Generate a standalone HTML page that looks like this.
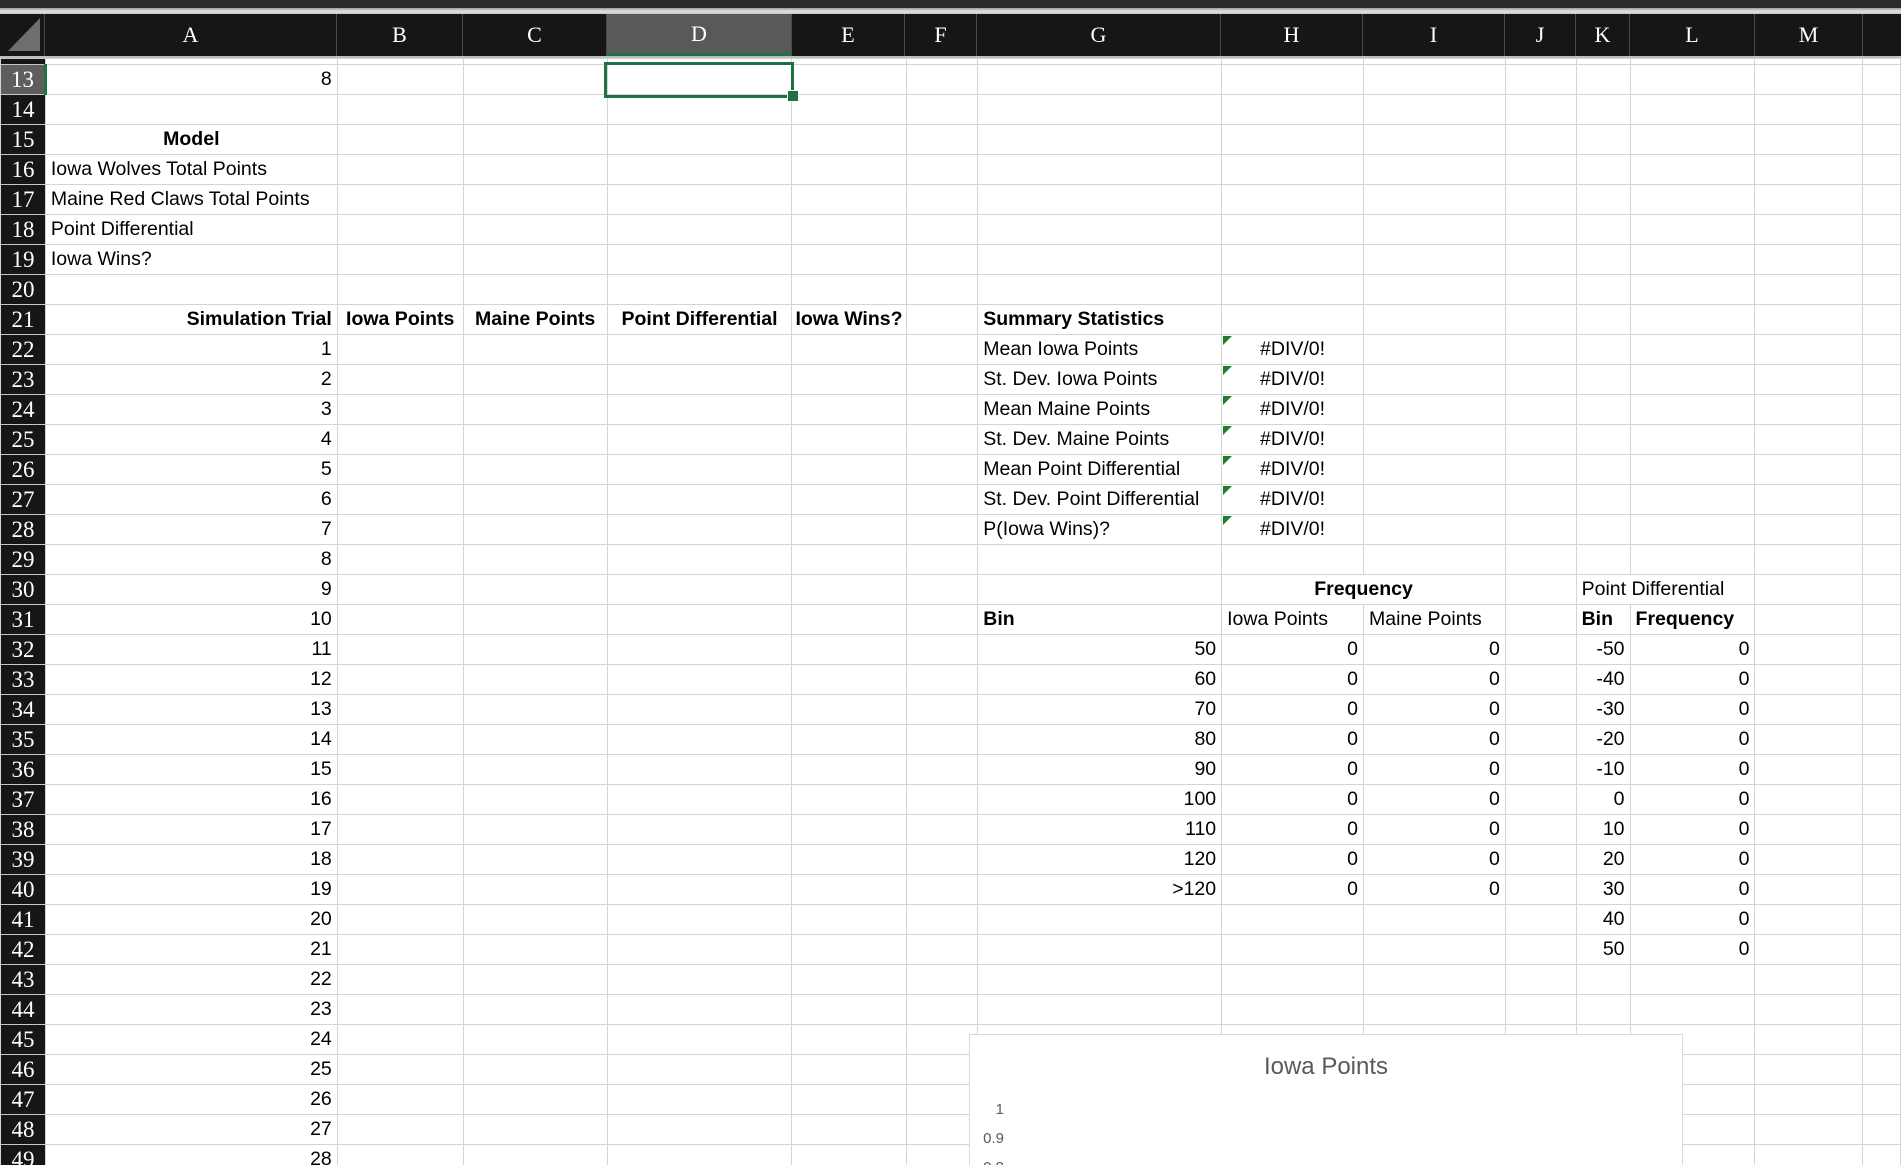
<!DOCTYPE html>
<html><head><meta charset="utf-8">
<style>
html,body{margin:0;padding:0;background:#fff;width:1901px;height:1165px;overflow:hidden;position:relative;font-family:"Liberation Sans",sans-serif;}
.top{position:absolute;left:0;top:0;width:1901px;height:8px;background:#2b2b2b;}
.band{position:absolute;left:0;top:8px;width:1901px;height:6px;background:linear-gradient(#9a9a9a,#e0e0e0,#c8c8c8);}
.hdr{position:absolute;left:0;top:14px;height:42px;width:1901px;background:#161616;}
.hdr div{position:absolute;top:0;height:42px;border-right:1px solid #4a4a4a;color:#fff;font-family:"Liberation Serif",serif;font-size:22px;line-height:42px;text-align:center;box-sizing:border-box;}
.hb{position:absolute;left:0;top:56px;width:1901px;height:2px;background:#bdbdbd;}
.wrap{position:absolute;left:0;top:0;width:1901px;height:1165px;overflow:hidden;}
table{position:absolute;left:0;top:58px;border-collapse:collapse;table-layout:fixed;}
td,th{padding:0 5px;border:1px solid #d4d4d4;height:30px;box-sizing:border-box;font-size:19.5px;white-space:nowrap;overflow:visible;color:#000;}
th{background:#161616;color:#fff;font-family:"Liberation Serif",serif;font-weight:normal;font-size:23px;text-align:center;padding:0;border-color:#c8c8c8 #d4d4d4;}
tr.p td,tr.p th{height:6px;}
.r{text-align:right}.c{text-align:center}.b{font-weight:bold}
.tri{position:relative}
.tri:before{content:"";position:absolute;left:1px;top:1px;border-top:9px solid #1d7f2e;border-right:9px solid transparent;}
.sel{position:absolute;left:604px;top:62px;width:190px;height:36px;border:3px solid #1e7145;box-sizing:border-box;}
.hdl{position:absolute;left:787px;top:90px;width:10px;height:10px;background:#1e7145;border:1px solid #fff;}
.chart{position:absolute;left:969px;top:1034px;width:714px;height:131px;background:#fff;border:1px solid #d9d9d9;border-bottom:none;box-sizing:border-box;overflow:hidden;}
.chart .t{position:absolute;left:0;width:100%;top:18px;text-align:center;font-size:24px;color:#595959;}
.chart .y{position:absolute;font-size:15px;color:#595959;text-align:right;width:40px;left:-6px;}
</style></head><body>
<div class="wrap">
<div class="top"></div><div class="band"></div>
<div class="hdr">
<div style="left:0;width:45px;background:#161616"><svg width="44" height="42"><polygon points="40,4 40,37 8,37" fill="#6e6e6e"/></svg></div>
<div style="left:45px;width:292px">A</div>
<div style="left:337px;width:126px">B</div>
<div style="left:463px;width:144px">C</div>
<div style="left:607px;width:185px;background:#595959;border-bottom:3px solid #1e7145;line-height:40px">D</div>
<div style="left:792px;width:113px">E</div>
<div style="left:905px;width:72px">F</div>
<div style="left:977px;width:244px">G</div>
<div style="left:1221px;width:142px">H</div>
<div style="left:1363px;width:142px">I</div>
<div style="left:1505px;width:71px">J</div>
<div style="left:1576px;width:54px">K</div>
<div style="left:1630px;width:125px">L</div>
<div style="left:1755px;width:108px">M</div>
</div>
<div class="hb"></div>
<table>
<colgroup><col style="width:45px"><col style="width:292px"><col style="width:126px"><col style="width:144px"><col style="width:185px"><col style="width:113px"><col style="width:72px"><col style="width:244px"><col style="width:142px"><col style="width:142px"><col style="width:71px"><col style="width:54px"><col style="width:125px"><col style="width:108px"><col style="width:38px"></colgroup>
<tr class="p"><th></th><td></td><td></td><td></td><td></td><td></td><td></td><td></td><td></td><td></td><td></td><td></td><td></td><td></td><td></td></tr>
<tr><th style="background:#5e5e5e;border-right:3px solid #1e7145">13</th><td class="r">8</td><td></td><td></td><td></td><td></td><td></td><td></td><td></td><td></td><td></td><td></td><td></td><td></td><td></td></tr>
<tr><th>14</th><td></td><td></td><td></td><td></td><td></td><td></td><td></td><td></td><td></td><td></td><td></td><td></td><td></td><td></td></tr>
<tr><th>15</th><td class="c b">Model</td><td></td><td></td><td></td><td></td><td></td><td></td><td></td><td></td><td></td><td></td><td></td><td></td><td></td></tr>
<tr><th>16</th><td>Iowa Wolves Total Points</td><td></td><td></td><td></td><td></td><td></td><td></td><td></td><td></td><td></td><td></td><td></td><td></td><td></td></tr>
<tr><th>17</th><td>Maine Red Claws Total Points</td><td></td><td></td><td></td><td></td><td></td><td></td><td></td><td></td><td></td><td></td><td></td><td></td><td></td></tr>
<tr><th>18</th><td>Point Differential</td><td></td><td></td><td></td><td></td><td></td><td></td><td></td><td></td><td></td><td></td><td></td><td></td><td></td></tr>
<tr><th>19</th><td>Iowa Wins?</td><td></td><td></td><td></td><td></td><td></td><td></td><td></td><td></td><td></td><td></td><td></td><td></td><td></td></tr>
<tr><th>20</th><td></td><td></td><td></td><td></td><td></td><td></td><td></td><td></td><td></td><td></td><td></td><td></td><td></td><td></td></tr>
<tr><th>21</th><td class="r b">Simulation Trial</td><td class="c b" style="padding:0">Iowa Points</td><td class="c b" style="padding:0">Maine Points</td><td class="c b" style="padding:0">Point Differential</td><td class="b" style="padding:0 3px">Iowa Wins?</td><td></td><td class="b">Summary Statistics</td><td></td><td></td><td></td><td></td><td></td><td></td><td></td></tr>
<tr><th>22</th><td class="r">1</td><td></td><td></td><td></td><td></td><td></td><td>Mean Iowa Points</td><td class="c tri">#DIV/0!</td><td></td><td></td><td></td><td></td><td></td><td></td></tr>
<tr><th>23</th><td class="r">2</td><td></td><td></td><td></td><td></td><td></td><td>St. Dev. Iowa Points</td><td class="c tri">#DIV/0!</td><td></td><td></td><td></td><td></td><td></td><td></td></tr>
<tr><th>24</th><td class="r">3</td><td></td><td></td><td></td><td></td><td></td><td>Mean Maine Points</td><td class="c tri">#DIV/0!</td><td></td><td></td><td></td><td></td><td></td><td></td></tr>
<tr><th>25</th><td class="r">4</td><td></td><td></td><td></td><td></td><td></td><td>St. Dev. Maine Points</td><td class="c tri">#DIV/0!</td><td></td><td></td><td></td><td></td><td></td><td></td></tr>
<tr><th>26</th><td class="r">5</td><td></td><td></td><td></td><td></td><td></td><td>Mean Point Differential</td><td class="c tri">#DIV/0!</td><td></td><td></td><td></td><td></td><td></td><td></td></tr>
<tr><th>27</th><td class="r">6</td><td></td><td></td><td></td><td></td><td></td><td>St. Dev. Point Differential</td><td class="c tri">#DIV/0!</td><td></td><td></td><td></td><td></td><td></td><td></td></tr>
<tr><th>28</th><td class="r">7</td><td></td><td></td><td></td><td></td><td></td><td>P(Iowa Wins)?</td><td class="c tri">#DIV/0!</td><td></td><td></td><td></td><td></td><td></td><td></td></tr>
<tr><th>29</th><td class="r">8</td><td></td><td></td><td></td><td></td><td></td><td></td><td></td><td></td><td></td><td></td><td></td><td></td><td></td></tr>
<tr><th>30</th><td class="r">9</td><td></td><td></td><td></td><td></td><td></td><td></td><td colspan="2" class="c b">Frequency</td><td></td><td colspan="2">Point Differential</td><td></td><td></td></tr>
<tr><th>31</th><td class="r">10</td><td></td><td></td><td></td><td></td><td></td><td class="b">Bin</td><td>Iowa Points</td><td>Maine Points</td><td></td><td class="b">Bin</td><td class="b">Frequency</td><td></td><td></td></tr>
<tr><th>32</th><td class="r">11</td><td></td><td></td><td></td><td></td><td></td><td class="r">50</td><td class="r">0</td><td class="r">0</td><td></td><td class="r">-50</td><td class="r">0</td><td></td><td></td></tr>
<tr><th>33</th><td class="r">12</td><td></td><td></td><td></td><td></td><td></td><td class="r">60</td><td class="r">0</td><td class="r">0</td><td></td><td class="r">-40</td><td class="r">0</td><td></td><td></td></tr>
<tr><th>34</th><td class="r">13</td><td></td><td></td><td></td><td></td><td></td><td class="r">70</td><td class="r">0</td><td class="r">0</td><td></td><td class="r">-30</td><td class="r">0</td><td></td><td></td></tr>
<tr><th>35</th><td class="r">14</td><td></td><td></td><td></td><td></td><td></td><td class="r">80</td><td class="r">0</td><td class="r">0</td><td></td><td class="r">-20</td><td class="r">0</td><td></td><td></td></tr>
<tr><th>36</th><td class="r">15</td><td></td><td></td><td></td><td></td><td></td><td class="r">90</td><td class="r">0</td><td class="r">0</td><td></td><td class="r">-10</td><td class="r">0</td><td></td><td></td></tr>
<tr><th>37</th><td class="r">16</td><td></td><td></td><td></td><td></td><td></td><td class="r">100</td><td class="r">0</td><td class="r">0</td><td></td><td class="r">0</td><td class="r">0</td><td></td><td></td></tr>
<tr><th>38</th><td class="r">17</td><td></td><td></td><td></td><td></td><td></td><td class="r">110</td><td class="r">0</td><td class="r">0</td><td></td><td class="r">10</td><td class="r">0</td><td></td><td></td></tr>
<tr><th>39</th><td class="r">18</td><td></td><td></td><td></td><td></td><td></td><td class="r">120</td><td class="r">0</td><td class="r">0</td><td></td><td class="r">20</td><td class="r">0</td><td></td><td></td></tr>
<tr><th>40</th><td class="r">19</td><td></td><td></td><td></td><td></td><td></td><td class="r">&gt;120</td><td class="r">0</td><td class="r">0</td><td></td><td class="r">30</td><td class="r">0</td><td></td><td></td></tr>
<tr><th>41</th><td class="r">20</td><td></td><td></td><td></td><td></td><td></td><td></td><td></td><td></td><td></td><td class="r">40</td><td class="r">0</td><td></td><td></td></tr>
<tr><th>42</th><td class="r">21</td><td></td><td></td><td></td><td></td><td></td><td></td><td></td><td></td><td></td><td class="r">50</td><td class="r">0</td><td></td><td></td></tr>
<tr><th>43</th><td class="r">22</td><td></td><td></td><td></td><td></td><td></td><td></td><td></td><td></td><td></td><td></td><td></td><td></td><td></td></tr>
<tr><th>44</th><td class="r">23</td><td></td><td></td><td></td><td></td><td></td><td></td><td></td><td></td><td></td><td></td><td></td><td></td><td></td></tr>
<tr><th>45</th><td class="r">24</td><td></td><td></td><td></td><td></td><td></td><td></td><td></td><td></td><td></td><td></td><td></td><td></td><td></td></tr>
<tr><th>46</th><td class="r">25</td><td></td><td></td><td></td><td></td><td></td><td></td><td></td><td></td><td></td><td></td><td></td><td></td><td></td></tr>
<tr><th>47</th><td class="r">26</td><td></td><td></td><td></td><td></td><td></td><td></td><td></td><td></td><td></td><td></td><td></td><td></td><td></td></tr>
<tr><th>48</th><td class="r">27</td><td></td><td></td><td></td><td></td><td></td><td></td><td></td><td></td><td></td><td></td><td></td><td></td><td></td></tr>
<tr><th>49</th><td class="r">28</td><td></td><td></td><td></td><td></td><td></td><td></td><td></td><td></td><td></td><td></td><td></td><td></td><td></td></tr>
</table>
<div class="sel"></div><div class="hdl"></div>
<div class="chart">
<div class="t">Iowa Points</div>
<div class="y" style="top:66px">1</div>
<div class="y" style="top:95px">0.9</div>
<div class="y" style="top:124px">0.8</div>
</div>
</div>
</body></html>
